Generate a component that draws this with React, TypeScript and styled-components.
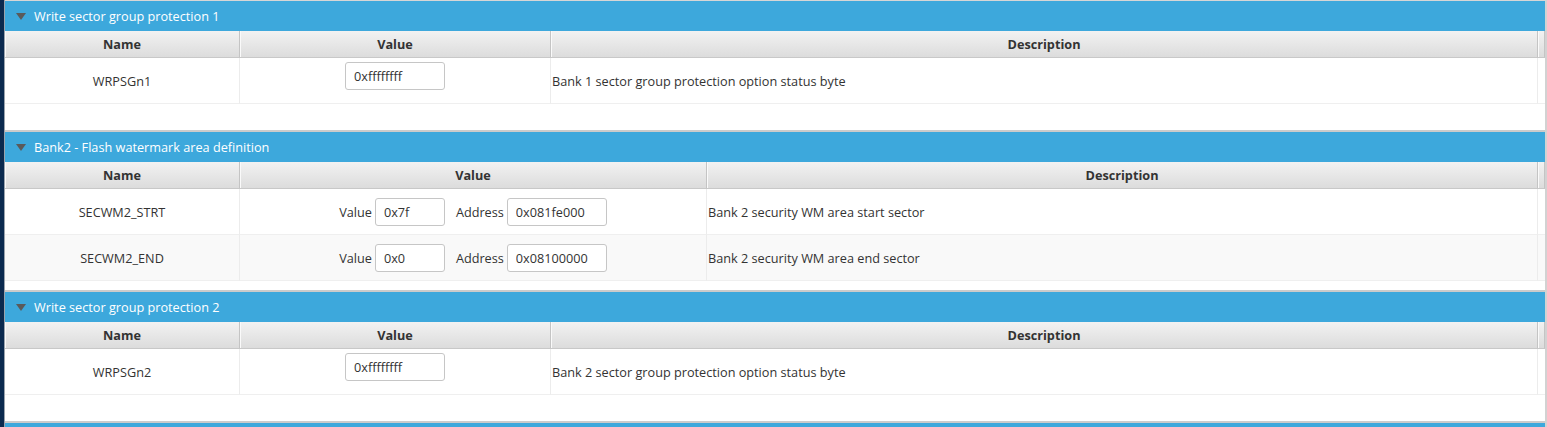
import React from 'react';
import styled, { createGlobalStyle } from 'styled-components';

interface Field {
  label?: string;
  value: string;
  width: number;
}

interface Row {
  name: string;
  fields: Field[];
  description: string;
}

interface SectionData {
  title: string;
  valueWidth: number;
  filler: number;
  rows: Row[];
}

const sections: SectionData[] = [
  {
    title: 'Write sector group protection 1',
    valueWidth: 311,
    filler: 26,
    rows: [
      {
        name: 'WRPSGn1',
        fields: [{ value: '0xffffffff', width: 100 }],
        description: 'Bank 1 sector group protection option status byte',
      },
    ],
  },
  {
    title: 'Bank2 - Flash watermark area definition',
    valueWidth: 467,
    filler: 9,
    rows: [
      {
        name: 'SECWM2_STRT',
        fields: [
          { label: 'Value', value: '0x7f', width: 70 },
          { label: 'Address', value: '0x081fe000', width: 100 },
        ],
        description: 'Bank 2 security WM area start sector',
      },
      {
        name: 'SECWM2_END',
        fields: [
          { label: 'Value', value: '0x0', width: 70 },
          { label: 'Address', value: '0x08100000', width: 100 },
        ],
        description: 'Bank 2 security WM area end sector',
      },
    ],
  },
  {
    title: 'Write sector group protection 2',
    valueWidth: 311,
    filler: 26,
    rows: [
      {
        name: 'WRPSGn2',
        fields: [{ value: '0xffffffff', width: 100 }],
        description: 'Bank 2 sector group protection option status byte',
      },
    ],
  },
];

const GlobalStyle = createGlobalStyle`
  html, body {
    margin: 0;
    padding: 0;
    overflow: hidden;
    background: #ffffff;
  }
  body {
    font-family: "Open Sans", "Noto Sans", sans-serif;
    font-size: 12.7px;
    color: #333333;
  }
`;

const Window = styled.div`
  display: flex;
  width: 1547px;
  height: 427px;
  overflow: hidden;
`;

const SideStrip = styled.div`
  width: 4px;
  flex-shrink: 0;
  background: #0b2a4f;
  border-right: 1px solid #9aa3ad;
`;

const Panel = styled.div`
  flex: 1;
  display: flex;
  flex-direction: column;
  border-top: 1px solid #d6d6d6;
  border-right: 2px solid #d2d2d2;
  min-width: 0;
`;

const Section = styled.section`
  display: flex;
  flex-direction: column;
  border-bottom: 2px solid #cbcbcb;
  flex-shrink: 0;
`;

const TitleBar = styled.div`
  height: 30px;
  flex-shrink: 0;
  display: flex;
  align-items: center;
  gap: 8px;
  padding-left: 11px;
  background: #3da8dc;
  color: #ffffff;
  font-size: 12.7px;
`;

const Arrow = styled.svg`
  width: 10px;
  height: 7px;
  flex-shrink: 0;
`;

const Grid = styled.div<{ $valueWidth: number }>`
  display: grid;
  grid-template-columns: 235px ${(p) => p.$valueWidth}px 1fr 7px;
`;

const HeadCell = styled.div`
  height: 26px;
  display: flex;
  align-items: center;
  justify-content: center;
  font-weight: 700;
  color: #333333;
  background: linear-gradient(#f2f2f2, #dcdcdc);
  border-right: 1px solid #c4c4c4;
  border-bottom: 1px solid #c8c8c8;
  box-shadow: inset 1px 0 0 #fafafa;
  &:last-child {
    border-right: none;
  }
`;

const Cell = styled.div<{ $alt: boolean; $align?: 'left' | 'center' }>`
  height: 45px;
  display: flex;
  align-items: center;
  justify-content: ${(p) => (p.$align === 'left' ? 'flex-start' : 'center')};
  padding-left: ${(p) => (p.$align === 'left' ? '1px' : '0')};
  background: ${(p) => (p.$alt ? '#f9f9f9' : '#ffffff')};
  border-right: 1px solid #ececec;
  border-bottom: 1px solid #efefef;
  color: #333333;
  white-space: nowrap;
  &:nth-child(4n) {
    border-right: none;
  }
`;

const Filler = styled.div<{ $height: number }>`
  height: ${(p) => p.$height}px;
  background: #ffffff;
`;

const FieldLabel = styled.span`
  margin-right: 3px;
  color: #333333;
`;

const FieldGroup = styled.div<{ $raised: boolean }>`
  display: flex;
  align-items: center;
  margin-bottom: ${(p) => (p.$raised ? '9px' : '0')};
  & + & {
    margin-left: 11px;
  }
`;

const ValueInput = styled.input<{ $width: number }>`
  box-sizing: border-box;
  width: ${(p) => p.$width}px;
  height: 28px;
  margin: 0;
  padding: 0 8px;
  border: 1px solid #c6c6c6;
  border-radius: 3px;
  background: #ffffff;
  font-family: "Open Sans", "Noto Sans", sans-serif;
  font-size: 12.7px;
  color: #333333;
  outline: none;
`;

const TableSection: React.FC<{ data: SectionData }> = ({ data }) => (
  <Section>
    <TitleBar>
      <Arrow viewBox="0 0 10 7">
        <polygon points="0,0 10,0 5,7" fill="#5a5a5a" />
      </Arrow>
      {data.title}
    </TitleBar>
    <Grid $valueWidth={data.valueWidth}>
      <HeadCell>Name</HeadCell>
      <HeadCell>Value</HeadCell>
      <HeadCell>Description</HeadCell>
      <HeadCell />
      {data.rows.map((row, i) => (
        <React.Fragment key={row.name}>
          <Cell $alt={i % 2 === 1}>{row.name}</Cell>
          <Cell $alt={i % 2 === 1}>
            {row.fields.map((f) => (
              <FieldGroup key={f.value + (f.label ?? '')} $raised={!f.label}>
                {f.label && <FieldLabel>{f.label}</FieldLabel>}
                <ValueInput $width={f.width} defaultValue={f.value} />
              </FieldGroup>
            ))}
          </Cell>
          <Cell $alt={i % 2 === 1} $align="left">
            {row.description}
          </Cell>
          <Cell $alt={i % 2 === 1} />
        </React.Fragment>
      ))}
    </Grid>
    <Filler $height={data.filler} />
  </Section>
);

const App: React.FC = () => (
  <>
    <GlobalStyle />
    <Window>
      <SideStrip />
      <Panel>
        {sections.map((s) => (
          <TableSection key={s.title} data={s} />
        ))}
        <TitleBar />
      </Panel>
    </Window>
  </>
);

export default App;
